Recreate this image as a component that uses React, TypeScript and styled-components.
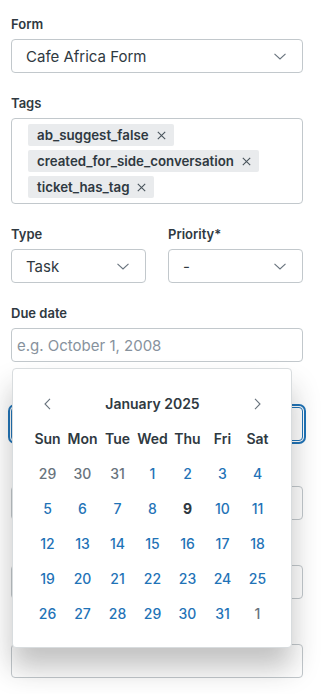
import React from "react";
import styled, { createGlobalStyle } from "styled-components";

const GlobalStyle = createGlobalStyle`
  html, body { margin: 0; padding: 0; background: #ffffff; }
  body { font-family: Inter, "Noto Sans", sans-serif; color: #2f3941; -webkit-font-smoothing: antialiased; }
  * { box-sizing: border-box; }
`;

const Page = styled.div`
  display: flex;
  flex-direction: column;
  gap: 20px;
  padding: 14px 19px 20px 11px;
  width: 322px;
  overflow: hidden;
`;

const Group = styled.div`
  position: relative;
  display: flex;
  flex-direction: column;
  gap: 5px;
`;

const Row = styled.div`
  display: grid;
  grid-template-columns: 1fr 1fr;
  column-gap: 22px;
`;

const Label = styled.label`
  display: block;
  height: 20px;
  font-size: 13px;
  line-height: 20px;
  font-weight: 600;
  color: #2f3941;
`;

const Field = styled.div<{ $focused?: boolean }>`
  display: flex;
  align-items: center;
  justify-content: space-between;
  height: 34px;
  padding: 0 16px 0 14px;
  border: 1px solid ${(p) => (p.$focused ? "#1f73b7" : "#c2c8cc")};
  border-radius: 4px;
  background: #fff;
  font-size: 15px;
  color: #2f3941;
  box-shadow: ${(p) => (p.$focused ? "0 0 0 1px #fff, 0 0 0 3px #1f73b7" : "none")};
`;

const Input = styled.div`
  display: flex;
  align-items: center;
  height: 34px;
  padding: 0 5px;
  border: 1px solid #c2c8cc;
  border-radius: 4px;
  background: #fff;
  font-size: 15px;
  color: #87929d;
`;

const TagBox = styled.div`
  display: flex;
  flex-wrap: wrap;
  align-content: flex-start;
  gap: 4px;
  padding: 5px 16px;
  border: 1px solid #c2c8cc;
  border-radius: 4px;
  background: #fff;
`;

const Tag = styled.span`
  display: inline-flex;
  align-items: center;
  gap: 8px;
  height: 22px;
  padding: 0 8px 0 9px;
  border-radius: 2px;
  background: #e9ebed;
  font-size: 13.3px;
  font-weight: 600;
  color: #2f3941;
`;

const Popover = styled.div`
  position: absolute;
  z-index: 10;
  top: calc(100% + 6px);
  left: 1px;
  width: 280px;
  padding: 17px 16px 16px 17px;
  border: 1px solid #d8dcde;
  border-radius: 4px;
  background: #fff;
  box-shadow: 0 20px 28px 0 rgba(36, 36, 36, 0.28);
`;

const CalGrid = styled.div`
  display: grid;
  grid-template-columns: repeat(7, 35px);
  grid-auto-rows: 35px;
`;

const NavButton = styled.span`
  display: flex;
  align-items: center;
  justify-content: center;
  color: #68737d;
`;

const Title = styled.div`
  grid-column: span 5;
  display: flex;
  align-items: center;
  justify-content: center;
  font-size: 14px;
  font-weight: 600;
  color: #2f3941;
`;

const DayName = styled.div`
  display: flex;
  align-items: center;
  justify-content: center;
  font-size: 14px;
  font-weight: 600;
  color: #2f3941;
`;

const Day = styled.div<{ $kind: "in" | "out" | "today" }>`
  display: flex;
  align-items: center;
  justify-content: center;
  font-size: 14px;
  font-weight: ${(p) => (p.$kind === "today" ? 700 : 500)};
  color: ${(p) => (p.$kind === "in" ? "#1f73b7" : p.$kind === "today" ? "#2f3941" : "#68737d")};
`;

const Chevron = () => (
  <svg width="12" height="7" viewBox="0 0 12 7" fill="none">
    <path d="M0.5 0.8 L6 6 L11.5 0.8" stroke="#68737d" strokeWidth="1.1" />
  </svg>
);

const Close = () => (
  <svg width="9" height="9" viewBox="0 0 9 9" fill="none">
    <path d="M0.8 0.8 L8.2 8.2 M8.2 0.8 L0.8 8.2" stroke="#49545c" strokeWidth="1.1" />
  </svg>
);

const Arrow = ({ dir }: { dir: "l" | "r" }) => (
  <svg width="7" height="12" viewBox="0 0 7 12" fill="none">
    <path
      d={dir === "l" ? "M6 0.8 L1 6 L6 11.2" : "M1 0.8 L6 6 L1 11.2"}
      stroke="#68737d"
      strokeWidth="1.1"
    />
  </svg>
);

const tags = ["ab_suggest_false", "created_for_side_conversation", "ticket_has_tag"];
const dayNames = ["Sun", "Mon", "Tue", "Wed", "Thu", "Fri", "Sat"];

const days: { n: number; kind: "in" | "out" | "today" }[] = [
  { n: 29, kind: "out" },
  { n: 30, kind: "out" },
  { n: 31, kind: "out" },
  ...Array.from({ length: 31 }, (_, i) => ({
    n: i + 1,
    kind: (i + 1 === 9 ? "today" : "in") as "in" | "today",
  })),
  { n: 1, kind: "out" },
];

export default function App() {
  return (
    <>
      <GlobalStyle />
      <Page>
        <Group>
          <Label>Form</Label>
          <Field>
            Cafe Africa Form
            <Chevron />
          </Field>
        </Group>
        <Group>
          <Label>Tags</Label>
          <TagBox>
            {tags.map((t) => (
              <Tag key={t}>
                {t}
                <Close />
              </Tag>
            ))}
          </TagBox>
        </Group>
        <Row>
          <Group>
            <Label>Type</Label>
            <Field>
              Task
              <Chevron />
            </Field>
          </Group>
          <Group>
            <Label>Priority*</Label>
            <Field>
              -
              <Chevron />
            </Field>
          </Group>
        </Row>
        <Group>
          <Label>Due date</Label>
          <Input>e.g. October 1, 2008</Input>
          <Popover>
            <CalGrid>
              <NavButton>
                <Arrow dir="l" />
              </NavButton>
              <Title>January 2025</Title>
              <NavButton>
                <Arrow dir="r" />
              </NavButton>
              {dayNames.map((d) => (
                <DayName key={d}>{d}</DayName>
              ))}
              {days.map((d, i) => (
                <Day key={i} $kind={d.kind}>
                  {d.n}
                </Day>
              ))}
            </CalGrid>
          </Popover>
        </Group>
        <Group>
          <Label />
          <Field $focused />
        </Group>
        <Group>
          <Label />
          <Field />
        </Group>
        <Group>
          <Label />
          <Field />
        </Group>
        <Group>
          <Label />
          <Field />
        </Group>
      </Page>
    </>
  );
}
